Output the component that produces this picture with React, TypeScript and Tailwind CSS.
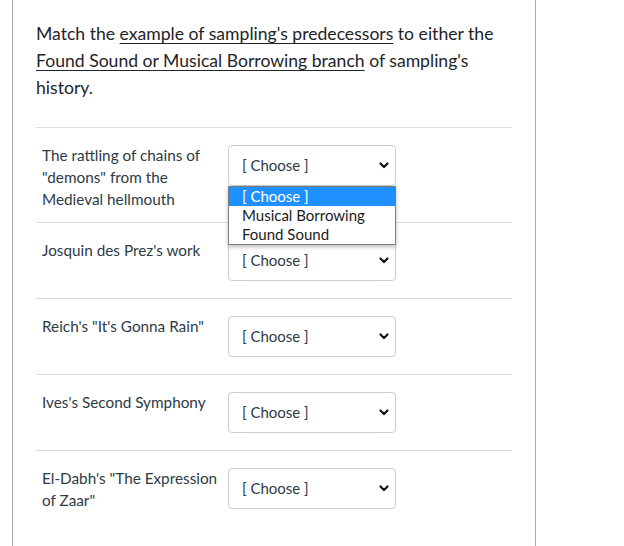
import React from "react";

const rows = [
    "The rattling of chains of \"demons\" from the Medieval hellmouth",
    "Josquin des Prez's work",
    "Reich's \"It's Gonna Rain\"",
    "Ives's Second Symphony",
    "El-Dabh's \"The Expression of Zaar\"",
];

const Chevron = () => (
    <svg width="10" height="7" viewBox="0 0 10 7" className="shrink-0">
        <path d="M1.5 1.5 L5 5 L8.5 1.5" fill="none" stroke="#111" strokeWidth="2.2" strokeLinecap="round" strokeLinejoin="round" />
    </svg>
);

const FakeSelect = ({ open }: { open?: boolean }) => (
    <div className="relative mt-[1px] mb-[5px]">
        <div className="w-[168px] h-[41px] rounded-[4px] border border-[#c7cdd1] bg-white flex items-center justify-between pl-[13px] pr-[6px]">
            <span className="text-[15px] text-[#2d3b45]">[ Choose ]</span>
            <Chevron />
        </div>
        {open && (
            <div className="absolute left-0 top-[41px] z-10 w-[168px] border border-[#7a7a7a] bg-white shadow-[0_2px_4px_rgba(0,0,0,0.25)] text-[15px] leading-[19px] text-[#1b1b1b]">
                <div className="bg-[#1e90ff] text-white pl-[13px]">[ Choose ]</div>
                <div className="pl-[13px]">Musical Borrowing</div>
                <div className="pl-[13px]">Found Sound</div>
            </div>
        )}
    </div>
);

export default function App() {
    return (
        <div className="w-[624px] h-[546px] bg-white font-['Lato','Liberation_Sans',sans-serif] text-[#2d3b45] overflow-hidden">
            <div className="ml-[12px] w-[524px] h-full border-l border-r border-[#a9a9a9] px-[23px] pt-[20px]">
                <p className="text-[17.6px] leading-[27px] text-[#1f2429]">
                    Match the <span className="underline underline-offset-[3px]">example of sampling's predecessors</span> to either the{" "}
                    <span className="underline underline-offset-[3px]">Found Sound or Musical Borrowing branch</span> of sampling's history.
                </p>

                <div className="mt-[26px]">
                    {rows.map((label, i) => (
                        <div key={i} className="flex border-t border-[#dcdfe1] pt-[16px] pb-[12px]">
                            <div className="w-[192px] shrink-0 px-[6px] text-[15.3px] leading-[22px]">{label}</div>
                            <FakeSelect open={i === 0} />
                        </div>
                    ))}
                </div>
            </div>
        </div>
    );
}
